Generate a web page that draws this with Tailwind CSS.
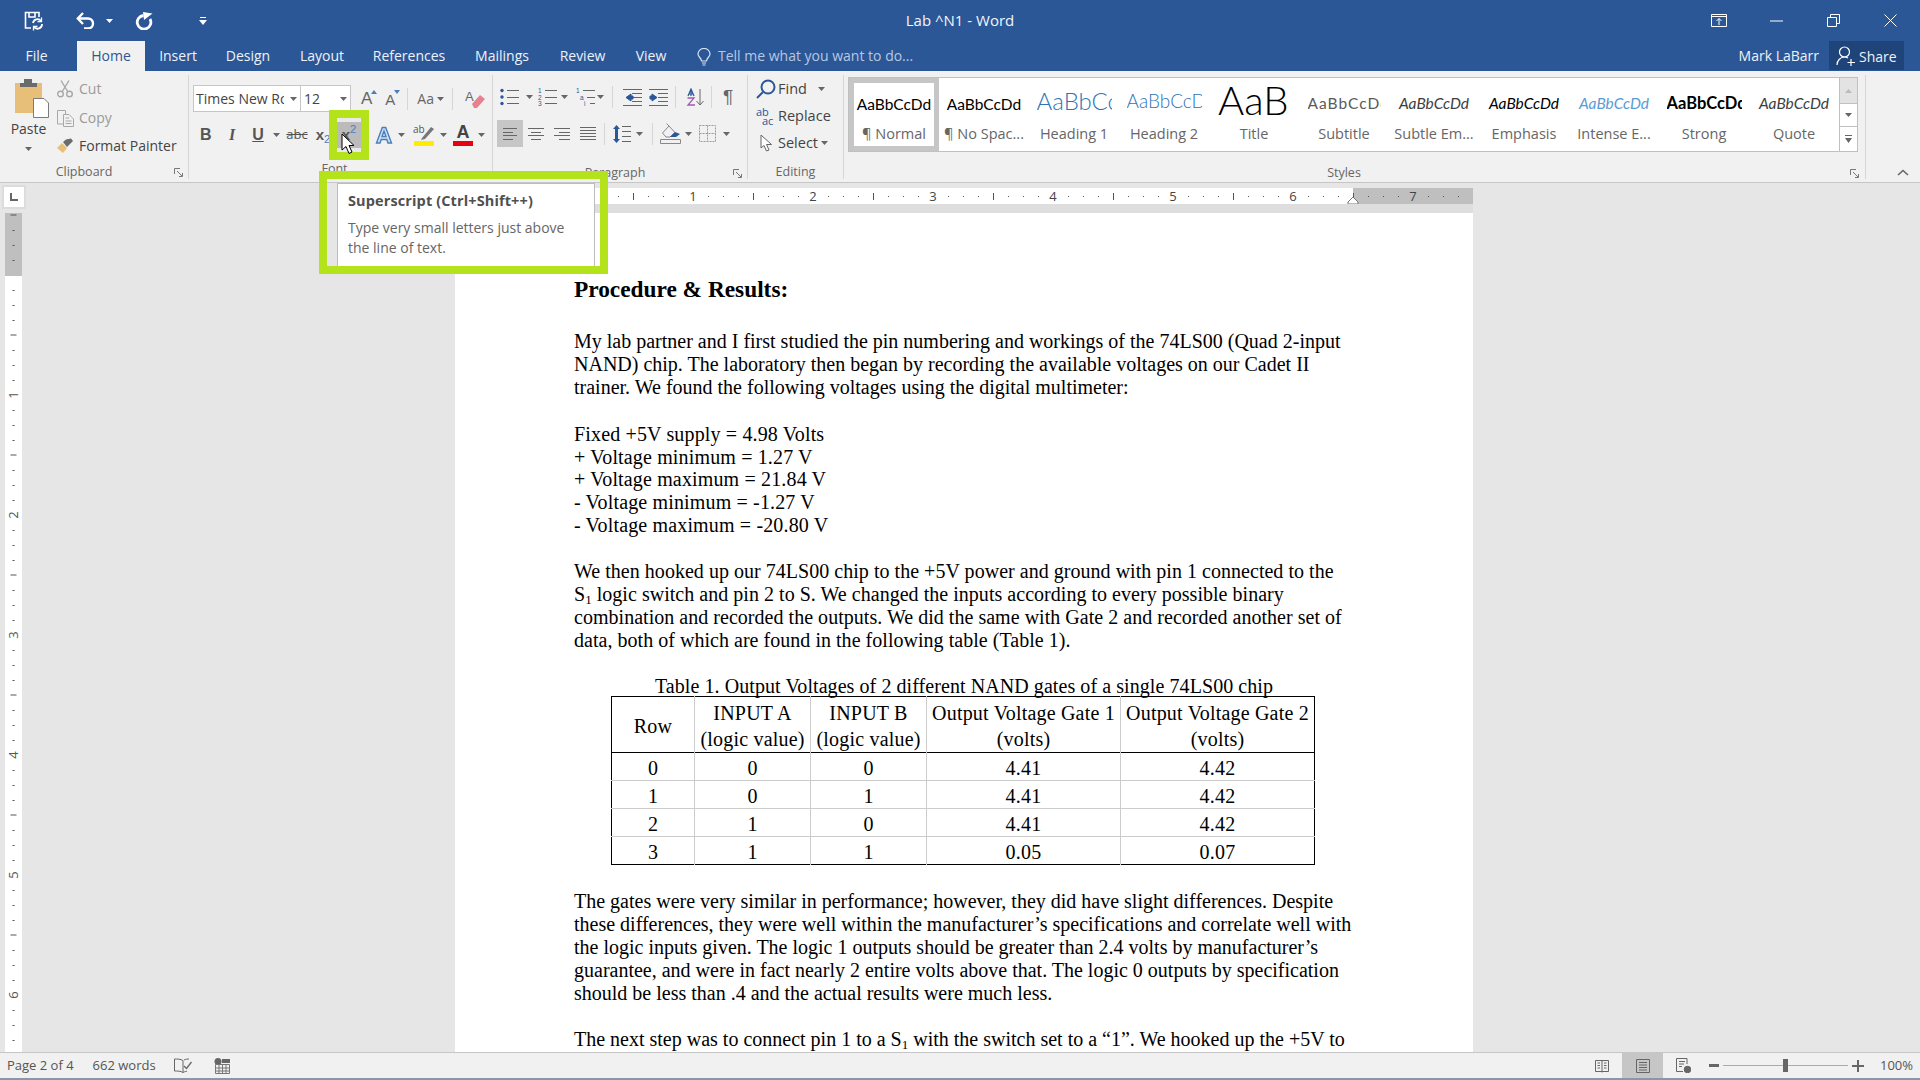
<!DOCTYPE html>
<html lang="en">
<head>
  <meta charset="UTF-8" />
  <title>Lab ^N1 - Word</title>
  <script src="https://cdn.jsdelivr.net/npm/@tailwindcss/browser@4"></script>
</head>
<body class="w-[1920px] h-[1080px] overflow-hidden relative flex flex-col bg-[#e6e6e6] text-[#444] font-['Open_Sans',sans-serif]">

  <!-- Title bar -->
  <header class="h-[41px] shrink-0 bg-[#2b5797] text-white flex items-center relative">
    <svg class="ml-[24px] w-[20px] h-[20px]" viewBox="0 0 20 20" fill="none" stroke="#fff" stroke-width="1.6"><path d="M7 17H1.500V1.500H15V6"/><path d="M5 1.500V6H11V1.500"/><path d="M9 12a4.500 4.500 0 0 1 8-2M18 13a4.500 4.500 0 0 1-8 3" stroke-width="1.800"/><path d="M17.500 6.500V10.500H13.500M9.500 19.500V15.500H13.500" stroke-width="1.300"/></svg>
    <svg class="ml-[32px] w-[19px] h-[17px]" viewBox="0 0 19 17" fill="none" stroke="#fff" stroke-width="2.400"><path d="M2 6.500H12a5 5 0 0 1 0 10H8"/><path d="M7 1 1.800 6.500 7 12"/></svg>
    <svg class="ml-[11px] w-[7px] h-[4px]" viewBox="0 0 7 4" fill="#fff"><path d="M0 0H7L3.500 4Z"/></svg>
    <svg class="ml-[22px] w-[18px] h-[18px]" viewBox="0 0 18 18" fill="none" stroke="#fff" stroke-width="2.800"><path d="M8.500 3.500a6.800 6.800 0 1 0 6.500 3.500"/><path d="M8 0 17.500 1.500 9 8Z" fill="#fff" stroke="none"/></svg>
    <svg class="ml-[46px] w-[8px] h-[8px]" viewBox="0 0 8 8" fill="#fff"><path d="M1 0H7V1H1ZM0 3H8L4 8Z"/></svg>
    <div class="absolute left-0 right-0 top-[10px] text-center text-[15px] leading-[20px] text-[#f1f4fa]">Lab ^N1 - Word</div>
    <div class="ml-auto flex items-center pr-[23px]">
      <svg class="w-[16px] h-[13px]" viewBox="0 0 16 13" fill="none" stroke="#fff"><path d="M.5.500H15.500V12.500H.5ZM.5 2.500H15.500M8 11V4.500M5.500 7 8 4.500 10.500 7"/></svg>
      <svg class="ml-[43px] w-[13px] h-[2px]" viewBox="0 0 13 2"><path d="M0 1H13" stroke="#fff"/></svg>
      <svg class="ml-[44px] w-[13px] h-[13px]" viewBox="0 0 13 13" fill="none" stroke="#fff"><path d="M.5 3.500H9.500V12.500H.5ZM3.500 3.500V.5H12.500V9.500H9.500"/></svg>
      <svg class="ml-[44px] w-[13px] h-[13px]" viewBox="0 0 13 13" fill="none" stroke="#fff"><path d="M.5.500 12.500 12.500M12.500.5.500 12.500"/></svg>
    </div>
  </header>

  <!-- Tabs -->
  <nav class="h-[30px] shrink-0 bg-[#2b5797] text-[#eef2f9] text-[14px] leading-[30px] flex">
    <div class="w-[73px] text-center">File</div>
    <div class="w-[68px] ml-[4px] text-center bg-[#f1f1f1] text-[#2b5797]">Home</div>
    <div class="w-[66px] text-center">Insert</div>
    <div class="w-[74px] text-center">Design</div>
    <div class="w-[74px] text-center">Layout</div>
    <div class="w-[100px] text-center">References</div>
    <div class="w-[86px] text-center">Mailings</div>
    <div class="w-[75px] text-center">Review</div>
    <div class="w-[62px] text-center">View</div>
    <svg class="ml-[15px] mt-[7px] w-[14px] h-[18px]" viewBox="0 0 14 18" fill="none" stroke="#dbe4f2" stroke-width="1.200"><path d="M4.500 13c0-3-3.500-4-3.500-7a6 5.500 0 0 1 12 0c0 3-3.500 4-3.500 7ZM5 15H9M5.500 17H8.500"/></svg>
    <div class="ml-[7px] text-[#b7c7e2]">Tell me what you want to do...</div>
    <div class="ml-auto">Mark LaBarr</div>
    <div class="w-[75px] h-[29px] ml-[10px] mr-[16px] bg-[#1f4479] flex items-center pl-[7px]">
      <svg class="w-[20px] h-[20px]" viewBox="0 0 20 20" fill="none" stroke="#fff" stroke-width="1.200"><circle cx="8.500" cy="6" r="5"/><path d="M1 19c0-4 3-8 7.500-8 1.500 0 2.500.3 3.500 1M15 13V20M11.500 16.500H19"/></svg>
      <span class="ml-[3px] text-[14px] leading-[20px] mt-[2px]">Share</span>
    </div>
  </nav>

  <!-- Ribbon -->
  <section class="h-[112px] shrink-0 bg-[#f1f1f1] border-b border-[#c6c6c6] pt-[4px] flex items-start">

    <!-- Clipboard -->
    <div class="w-[189px] h-[104px] border-r border-[#d6d6d6] flex flex-col">
      <div class="flex h-[91px]">
        <div class="w-[57px] pt-[4px] flex flex-col items-center">
          <svg class="ml-[7px] w-[36px] h-[39px]" viewBox="0 0 36 39"><rect x="1" y="4" width="27" height="30" fill="#e8bf78"/><path d="M6 4H10V0H18V4H23V8H6Z" fill="#6b6b6b"/><path d="M19.500 19.500H30L34.500 24V38.500H19.500Z" fill="#fff" stroke="#7a7a7a"/></svg>
          <span class="text-[14px] leading-[18px] mt-[2px]">Paste</span>
          <svg class="mt-[9px] w-[7px] h-[4px]" viewBox="0 0 7 4" fill="#666"><path d="M0 0H7L3.500 4Z"/></svg>
        </div>
        <div class="text-[14px] leading-[28px]">
          <div class="flex items-center h-[28px] text-[#9a9a9a]">
            <svg class="w-[16px] h-[18px]" viewBox="0 0 16 18" fill="none" stroke="#a8a8a8" stroke-width="1.400"><circle cx="3.500" cy="14" r="2.800"/><circle cx="12.500" cy="14" r="2.800"/><path d="M5 12 12 .5M11 12 4 .5"/></svg>
            <span class="ml-[6px]">Cut</span>
          </div>
          <div class="flex items-center h-[29px] text-[#9a9a9a]">
            <svg class="w-[17px] h-[18px]" viewBox="0 0 17 18" fill="none" stroke="#a8a8a8"><path d="M.5 1.500H8.500V5M.5 1.500V15H6"/><path d="M6.500 5.500H12L16.500 10V17.500H6.500ZM8.500 9H12M8.500 12H14.500M8.500 14.500H14.500"/></svg>
            <span class="ml-[5px]">Copy</span>
          </div>
          <div class="flex items-center h-[27px]">
            <svg class="w-[17px] h-[16px]" viewBox="0 0 17 16"><path d="M0 10 5 5 10 10 6 15Z" fill="#e8bf78"/><path d="M6 4 9 1.500 14 .5 16 3 10 9Z" fill="#6b6b6b"/></svg>
            <span class="ml-[5px]">Format Painter</span>
          </div>
        </div>
      </div>
      <div class="relative text-center text-[12.500px] leading-[14px] text-[#666] pr-[20px]">Clipboard
        <svg class="absolute right-[5px] top-[3px] w-[9px] h-[9px]" viewBox="0 0 9 9" fill="none" stroke="#777"><path d="M.5 6V.5H6M3 3 8 8M8.500 5V8.500H5"/></svg>
      </div>
    </div>

    <!-- Font -->
    <div class="w-[304px] h-[104px] border-r border-[#d6d6d6] flex flex-col pl-[4px]">
      <div class="mt-[10px] h-[27px] flex items-center">
        <div class="w-[108px] h-[27px] bg-white border border-[#c6c6c6] flex items-center">
          <span class="w-[90px] pl-[2px] overflow-hidden whitespace-nowrap text-[14px] leading-[25px]">Times New Roman</span>
          <svg class="ml-[6px] w-[7px] h-[4px]" viewBox="0 0 7 4" fill="#666"><path d="M0 0H7L3.500 4Z"/></svg>
        </div>
        <div class="w-[51px] h-[27px] -ml-px bg-white border border-[#c6c6c6] flex items-center pl-[3px]">
          <span class="text-[14px] leading-[25px]">12</span>
          <svg class="ml-auto mr-[3px] w-[7px] h-[4px]" viewBox="0 0 7 4" fill="#666"><path d="M0 0H7L3.500 4Z"/></svg>
        </div>
        <span class="ml-[10px] text-[17px] leading-[20px] font-['Liberation_Sans',sans-serif] text-[#666]">A</span>
        <svg class="-ml-[1px] -mt-[14px] w-[6px] h-[4px]" viewBox="0 0 6 4" fill="#4a7ebb"><path d="M0 4H6L3 0Z"/></svg>
        <span class="ml-[8px] text-[15px] leading-[20px] mt-[3px] font-['Liberation_Sans',sans-serif] text-[#666]">A</span>
        <svg class="-ml-[1px] -mt-[14px] w-[6px] h-[4px]" viewBox="0 0 6 4" fill="#4a7ebb"><path d="M0 0H6L3 4Z"/></svg>
        <div class="ml-[7px] w-px h-[22px] bg-[#d6d6d6]"></div>
        <span class="ml-[9px] text-[14px] leading-[20px] text-[#666]">Aa</span>
        <svg class="ml-[3px] w-[7px] h-[4px]" viewBox="0 0 7 4" fill="#666"><path d="M0 0H7L3.500 4Z"/></svg>
        <div class="ml-[8px] w-px h-[22px] bg-[#d6d6d6]"></div>
        <svg class="ml-[12px] w-[20px] h-[20px]" viewBox="0 0 20 20"><text x="0" y="12" font-size="13" fill="#666" font-family="Liberation Sans">A</text><path d="M7 15 15 6 20 10 12 19H9Z" fill="#e9808f"/></svg>
      </div>
      <div class="mt-[6px] h-[34px] flex items-center text-[#555]">
        <span class="w-[26px] pl-[7px] text-[16px] font-bold font-['Liberation_Sans',sans-serif]">B</span>
        <span class="w-[26px] text-center text-[16px] font-bold italic font-['Liberation_Serif',serif]">I</span>
        <span class="w-[26px] text-center text-[16px] font-bold underline font-['Liberation_Sans',sans-serif]">U</span>
        <svg class="ml-[2px] w-[7px] h-[4px]" viewBox="0 0 7 4" fill="#666"><path d="M0 0H7L3.500 4Z"/></svg>
        <span class="w-[28px] ml-[3px] text-center text-[13px] line-through">abc</span>
        <span class="w-[24px] text-center text-[15px] font-bold font-['Liberation_Sans',sans-serif] whitespace-nowrap">x<sub class="text-[#4a7ebb] font-normal">2</sub></span>
        <span class="w-[24px] h-[34px] ml-[2px] flex items-center justify-center bg-[#bbb] border-y-[4px] border-[#e9e9e9] text-[15px] font-bold font-['Liberation_Sans',sans-serif] whitespace-nowrap">x<sup class="text-[#4a7ebb] font-normal">2</sup></span>
        <svg class="ml-[13px] w-[20px] h-[20px]" viewBox="0 0 20 20" fill="#cfe0f3" stroke="#4a7ebb" stroke-width="1.400"><path d="M2.500 18 8.300 2.500H11.700L17.500 18H14L12.800 14.500H7.200L6 18ZM8 11.500H12L10 6Z"/></svg>
        <svg class="ml-[4px] w-[7px] h-[4px]" viewBox="0 0 7 4" fill="#666"><path d="M0 0H7L3.500 4Z"/></svg>
        <svg class="ml-[8px] w-[22px] h-[22px]" viewBox="0 0 22 22"><text x="0" y="9" font-size="10" fill="#555" font-family="Open Sans">ab</text><path d="M9 14 18 3 21 5 12 15 8 16Z" fill="#777"/><rect x="1" y="17" width="20" height="5" fill="#ffec00"/></svg>
        <svg class="ml-[5px] w-[7px] h-[4px]" viewBox="0 0 7 4" fill="#666"><path d="M0 0H7L3.500 4Z"/></svg>
        <div class="ml-[5px] w-[22px] flex flex-col items-center">
          <span class="text-[18px] leading-[16px] font-bold font-['Liberation_Sans',sans-serif] text-[#444]">A</span>
          <span class="w-[20px] h-[5px] mt-[1px] bg-[#e60012]"></span>
        </div>
        <svg class="ml-[4px] w-[7px] h-[4px]" viewBox="0 0 7 4" fill="#666"><path d="M0 0H7L3.500 4Z"/></svg>
      </div>
      <div class="mt-[10px] text-center text-[12.500px] leading-[14px] text-[#666] pr-[16px]">Font</div>
    </div>

    <!-- Paragraph -->
    <div class="w-[255px] h-[104px] border-r border-[#d6d6d6] flex flex-col">
      <div class="mt-[12px] h-[20px] flex items-center pl-[7px]">
        <svg class="w-[19px] h-[18px]" viewBox="0 0 19 18" stroke="#666"><path d="M7 2.500H19M7 9.500H19M7 15.500H19"/><g fill="#2b579a" stroke="none"><circle cx="2" cy="2.500" r="1.700"/><circle cx="2" cy="9" r="1.700"/><circle cx="2" cy="15.500" r="1.700"/></g></svg>
        <svg class="ml-[7px] w-[7px] h-[4px]" viewBox="0 0 7 4" fill="#666"><path d="M0 0H7L3.500 4Z"/></svg>
        <svg class="ml-[5px] w-[19px] h-[18px]" viewBox="0 0 19 18" stroke="#666"><path d="M7 2.500H19M7 9.500H19M7 15.500H19"/><g fill="#2b579a" stroke="none" font-size="6.500" font-family="Liberation Sans"><text x="0" y="5">1</text><text x="0" y="12">2</text><text x="0" y="18">3</text></g></svg>
        <svg class="ml-[4px] w-[7px] h-[4px]" viewBox="0 0 7 4" fill="#666"><path d="M0 0H7L3.500 4Z"/></svg>
        <svg class="ml-[8px] w-[19px] h-[18px]" viewBox="0 0 19 18" stroke="#666"><path d="M7 2.500H19M11 9.500H19M14 15.500H19"/><g fill="#2b579a" stroke="none" font-size="6.500" font-family="Liberation Sans"><text x="0" y="5">1</text><text x="4" y="12">a</text><text x="8" y="18">i</text></g></svg>
        <svg class="ml-[2px] w-[7px] h-[4px]" viewBox="0 0 7 4" fill="#666"><path d="M0 0H7L3.500 4Z"/></svg>
        <div class="ml-[8px] w-px h-[22px] bg-[#d6d6d6]"></div>
        <svg class="ml-[10px] w-[19px] h-[17px]" viewBox="0 0 19 17"><path d="M0 .5H19M9 4.500H19M9 8.500H19M9 12.500H19M0 16.500H19" stroke="#666"/><path d="M8 5 3 8.500 8 12V10H10V7H8Z" fill="#2b579a" stroke="#2b579a"/></svg>
        <svg class="ml-[7px] w-[19px] h-[17px]" viewBox="0 0 19 17"><path d="M0 .5H19M9 4.500H19M9 8.500H19M9 12.500H19M0 16.500H19" stroke="#666"/><path d="M3 5 8 8.500 3 12V10H1V7H3Z" fill="#2b579a" stroke="#2b579a"/></svg>
        <div class="ml-[7px] w-px h-[22px] bg-[#d6d6d6]"></div>
        <svg class="ml-[10px] w-[18px] h-[18px]" viewBox="0 0 18 18" fill="none"><path d="M5 8V3M2 8 5 1 8 8M2.500 6H7.500" stroke="#2b579a" stroke-width="1.200"/><path d="M1.500 10H8L2 17H9" stroke="#a05bb0" stroke-width="1.300"/><path d="M14 1V16.500M10.500 13 14 17 17.500 13" stroke="#666"/></svg>
        <div class="ml-[7px] w-px h-[22px] bg-[#d6d6d6]"></div>
        <span class="ml-[11px] text-[19px] leading-[20px] text-[#666] font-['Liberation_Sans',sans-serif]">¶</span>
      </div>
      <div class="mt-[13px] h-[27px] flex items-center pl-[4px]">
        <div class="w-[26px] h-[27px] bg-[#c6c6c6] flex items-center justify-center">
          <svg class="w-[16px] h-[12px]" viewBox="0 0 16 12" stroke="#666"><path d="M1 .5H15M1 4.500H11M1 7.500H15M1 11.500H11"/></svg>
        </div>
        <svg class="ml-[5px] w-[16px] h-[12px]" viewBox="0 0 16 12" stroke="#666"><path d="M0 .5H16M3 4.500H13M0 7.500H16M3 11.500H13"/></svg>
        <svg class="ml-[10px] w-[16px] h-[12px]" viewBox="0 0 16 12" stroke="#666"><path d="M0 .5H16M5 4.500H16M0 7.500H16M5 11.500H16"/></svg>
        <svg class="ml-[10px] w-[16px] h-[14px]" viewBox="0 0 16 14" stroke="#666"><path d="M0 .5H16M0 3.500H16M0 6.500H16M0 9.500H16M0 12.500H16"/></svg>
        <div class="ml-[8px] w-px h-[22px] bg-[#d6d6d6]"></div>
        <svg class="ml-[8px] w-[18px] h-[18px]" viewBox="0 0 18 18"><path d="M3.500 0 7 4H5V14H7L3.500 18 0 14H2V4H0Z" fill="#2b579a"/><path d="M9 1.500H18M9 6.500H18M9 11.500H18M9 16.500H18" stroke="#666"/></svg>
        <svg class="ml-[5px] w-[7px] h-[4px]" viewBox="0 0 7 4" fill="#666"><path d="M0 0H7L3.500 4Z"/></svg>
        <div class="ml-[9px] w-px h-[22px] bg-[#d6d6d6]"></div>
        <svg class="ml-[7px] w-[21px] h-[21px]" viewBox="0 0 21 21" fill="none"><path d="M.5 16.500H20.500V20.500H.5ZM6 14 2.500 10 9 3 15 9.500 10 14Z" stroke="#888"/><path d="M9 3 6.500.5" stroke="#888"/><path d="M15 9 20 11 16 14 10 14Z" fill="#2b579a"/></svg>
        <svg class="ml-[4px] w-[7px] h-[4px]" viewBox="0 0 7 4" fill="#666"><path d="M0 0H7L3.500 4Z"/></svg>
        <svg class="ml-[7px] w-[17px] h-[17px]" viewBox="0 0 17 17" fill="none" stroke="#9a9a9a" stroke-dasharray="2 1"><path d="M.5.500H16.500V16.500H.5ZM.5 8.500H16.500M8.500.5V16.500"/></svg>
        <svg class="ml-[7px] w-[7px] h-[4px]" viewBox="0 0 7 4" fill="#666"><path d="M0 0H7L3.500 4Z"/></svg>
      </div>
      <div class="relative mt-[19px] text-center text-[12.500px] leading-[14px] text-[#666] pr-[10px]">Paragraph
        <svg class="absolute right-[5px] top-[3px] w-[9px] h-[9px]" viewBox="0 0 9 9" fill="none" stroke="#777"><path d="M.5 6V.5H6M3 3 8 8M8.500 5V8.500H5"/></svg>
      </div>
    </div>

    <!-- Editing -->
    <div class="w-[96px] h-[104px] border-r border-[#d6d6d6] flex flex-col">
      <div class="h-[91px] pl-[8px] text-[14.500px]">
        <div class="h-[27px] flex items-center">
          <svg class="w-[20px] h-[20px]" viewBox="0 0 20 20" fill="none" stroke="#2b579a" stroke-width="2"><circle cx="12" cy="8" r="6.500"/><path d="M7 13 1 19"/></svg>
          <span class="ml-[2px]">Find</span>
          <svg class="ml-[11px] w-[7px] h-[4px]" viewBox="0 0 7 4" fill="#666"><path d="M0 0H7L3.500 4Z"/></svg>
        </div>
        <div class="h-[27px] flex items-center">
          <div class="w-[21px] text-[11px] leading-[9px] text-[#2b579a]">ab<br /><span class="pl-[6px]">ac</span></div>
          <span class="ml-[1px]">Replace</span>
        </div>
        <div class="h-[27px] flex items-center">
          <svg class="ml-[4px] w-[13px] h-[18px]" viewBox="0 0 13 18" fill="#fff" stroke="#666"><path d="M1 1V14L4 11.500 6.500 17 9 16 6.500 10.500H11.500Z"/></svg>
          <span class="ml-[5px]">Select</span>
          <svg class="ml-[3px] w-[7px] h-[4px]" viewBox="0 0 7 4" fill="#666"><path d="M0 0H7L3.500 4Z"/></svg>
        </div>
      </div>
      <div class="text-center text-[12.500px] leading-[14px] text-[#666]">Editing</div>
    </div>

    <!-- Styles -->
    <div class="w-[1022px] h-[104px] relative border-r border-[#d6d6d6] flex flex-col pl-[4px]">
      <div class="mt-[2px] h-[75px] w-[1010px] bg-white border border-[#c0c0c0] flex">
        <div class="w-[90px] h-[73px] border-[5px] border-[#c6c6c6] flex flex-col items-center">
          <div class="w-[76px] h-[30px] mt-[3px] overflow-hidden whitespace-nowrap flex items-end justify-center text-black text-[15.500px] leading-[24px] font-['Lato',sans-serif]">AaBbCcDd</div>
          <div class="text-[14.500px] leading-[20px] mt-[8px] text-[#666]">¶ Normal</div>
        </div>
        <div class="w-[90px] flex flex-col items-center pt-[8px]">
          <div class="w-[76px] h-[30px] overflow-hidden whitespace-nowrap flex items-end justify-center text-black text-[15.500px] leading-[24px] font-['Lato',sans-serif]">AaBbCcDd</div>
          <div class="text-[14.500px] leading-[20px] mt-[8px] text-[#666]">¶ No Spac...</div>
        </div>
        <div class="w-[90px] flex flex-col items-center pt-[8px]">
          <div class="w-[75px] h-[30px] overflow-hidden whitespace-nowrap text-[#2e74b5] text-[24px] leading-[30px] font-light font-['Lato',sans-serif]">AaBbCcDd</div>
          <div class="text-[14.500px] leading-[20px] mt-[8px] text-[#666]">Heading 1</div>
        </div>
        <div class="w-[90px] flex flex-col items-center pt-[8px]">
          <div class="w-[75px] h-[30px] overflow-hidden whitespace-nowrap text-[#2e74b5] text-[19px] leading-[30px] font-light font-['Lato',sans-serif]">AaBbCcDd</div>
          <div class="text-[14.500px] leading-[20px] mt-[8px] text-[#666]">Heading 2</div>
        </div>
        <div class="w-[90px] flex flex-col items-center pt-[8px]">
          <div class="w-[72px] h-[30px] overflow-hidden whitespace-nowrap text-black text-[40px] leading-[28px] font-light font-['Lato',sans-serif]">AaBbCcDd</div>
          <div class="text-[14.500px] leading-[20px] mt-[8px] text-[#666]">Title</div>
        </div>
        <div class="w-[90px] flex flex-col items-center pt-[8px]">
          <div class="w-[73px] h-[30px] overflow-hidden whitespace-nowrap text-[#5a5a5a] text-[15.500px] tracking-[1px] leading-[35px] font-['Lato',sans-serif]">AaBbCcDd</div>
          <div class="text-[14.500px] leading-[20px] mt-[8px] text-[#666]">Subtitle</div>
        </div>
        <div class="w-[90px] flex flex-col items-center pt-[8px]">
          <div class="w-[76px] h-[30px] overflow-hidden whitespace-nowrap text-center text-[#404040] text-[15.500px] italic leading-[35px] font-['Lato',sans-serif]">AaBbCcDd</div>
          <div class="text-[14.500px] leading-[20px] mt-[8px] text-[#666]">Subtle Em...</div>
        </div>
        <div class="w-[90px] flex flex-col items-center pt-[8px]">
          <div class="w-[76px] h-[30px] overflow-hidden whitespace-nowrap text-center text-black text-[15.500px] italic leading-[35px] font-['Lato',sans-serif]">AaBbCcDd</div>
          <div class="text-[14.500px] leading-[20px] mt-[8px] text-[#666]">Emphasis</div>
        </div>
        <div class="w-[90px] flex flex-col items-center pt-[8px]">
          <div class="w-[76px] h-[30px] overflow-hidden whitespace-nowrap text-center text-[#5b9bd5] text-[15.500px] italic leading-[35px] font-['Lato',sans-serif]">AaBbCcDd</div>
          <div class="text-[14.500px] leading-[20px] mt-[8px] text-[#666]">Intense E...</div>
        </div>
        <div class="w-[90px] flex flex-col items-center pt-[8px]">
          <div class="w-[75px] h-[30px] overflow-hidden whitespace-nowrap text-black text-[16.500px] font-bold leading-[35px] font-['Lato',sans-serif]">AaBbCcDd</div>
          <div class="text-[14.500px] leading-[20px] mt-[8px] text-[#666]">Strong</div>
        </div>
        <div class="w-[90px] flex flex-col items-center pt-[8px]">
          <div class="w-[76px] h-[30px] overflow-hidden whitespace-nowrap text-center text-[#404040] text-[15.500px] italic leading-[35px] font-['Lato',sans-serif]">AaBbCcDd</div>
          <div class="text-[14.500px] leading-[20px] mt-[8px] text-[#666]">Quote</div>
        </div>
        <div class="w-[18px] border-l border-[#c0c0c0] flex flex-col">
          <div class="h-[26px] bg-[#e3e3e3] border-b border-[#c0c0c0] flex items-center justify-center"><svg class="w-[7px] h-[4px]" viewBox="0 0 7 4" fill="#bbb"><path d="M0 4H7L3.500 0Z"/></svg></div>
          <div class="h-[23px] border-b border-[#c0c0c0] flex items-center justify-center"><svg class="w-[7px] h-[4px]" viewBox="0 0 7 4" fill="#666"><path d="M0 0H7L3.500 4Z"/></svg></div>
          <div class="flex-1 flex items-center justify-center"><svg class="w-[7px] h-[8px]" viewBox="0 0 7 8" fill="#666"><path d="M0 0H7V1H0ZM0 3H7L3.500 8Z"/></svg></div>
        </div>
      </div>
      <div class="relative mt-[14px] text-center text-[12.500px] leading-[14px] text-[#666] w-[1010px] pr-[18px]">Styles
        <svg class="absolute -right-[1px] top-[3px] w-[9px] h-[9px]" viewBox="0 0 9 9" fill="none" stroke="#777"><path d="M.5 6V.5H6M3 3 8 8M8.500 5V8.500H5"/></svg>
      </div>
    </div>
    <svg class="ml-[31px] mt-[94px] w-[12px] h-[7px]" viewBox="0 0 12 7" fill="none" stroke="#666" stroke-width="1.600"><path d="M1 6 6 1.500 11 6"/></svg>
  </section>

  <!-- Document area -->
  <main class="h-[869px] shrink-0 flex overflow-hidden">
    <div class="w-[455px] shrink-0 pl-[4px] pt-[4px]">
      <div class="w-[20px] h-[20px] bg-white shadow-[0_0_0_2px_#dcdcdc] flex items-center justify-center">
        <svg class="w-[8px] h-[8px]" viewBox="0 0 8 8" fill="none" stroke="#666" stroke-width="2"><path d="M1 0V7H8"/></svg>
      </div>
      <svg class="ml-[1px] mt-[6px] w-[17px] h-[840px]" viewBox="0 0 17 840">
        <rect width="17" height="63" fill="#bfbfbf"/>
        <rect y="63" width="17" height="777" fill="#fff"/>
        <path d="M8.500 17V840" stroke="#555" stroke-width="2" stroke-dasharray="1 14 1 14 1 29 1 14 1 14 1 29"/>
        <path d="M5.500 2H11.500M5.500 122H11.500M5.500 242H11.500M5.500 362H11.500M5.500 482H11.500M5.500 602H11.500M5.500 722H11.500" stroke="#555"/>
        <g fill="#555" font-size="13" font-family="Open Sans" text-anchor="middle">
          <text transform="translate(13 182) rotate(-90)">1</text>
          <text transform="translate(13 302) rotate(-90)">2</text>
          <text transform="translate(13 422) rotate(-90)">3</text>
          <text transform="translate(13 542) rotate(-90)">4</text>
          <text transform="translate(13 662) rotate(-90)">5</text>
          <text transform="translate(13 782) rotate(-90)">6</text>
        </g>
      </svg>
    </div>

    <div class="w-[1018px] shrink-0 pt-[5px]">
      <svg class="block w-[1018px] h-[16px]" viewBox="0 0 1018 16">
        <rect width="1018" height="16" fill="#bfbfbf"/>
        <rect x="118" width="780" height="16" fill="#fff"/>
        <path d="M133 8.500H1018" stroke="#555" stroke-dasharray="1 14 1 14 1 29 1 14 1 14 1 29"/>
        <path d="M178.500 5V12M298.500 5V12M418.500 5V12M538.500 5V12M658.500 5V12M778.500 5V12M898.500 5V12" stroke="#555"/>
        <g fill="#444" font-size="13" font-family="Open Sans" text-anchor="middle">
          <text x="238" y="13">1</text><text x="358" y="13">2</text><text x="478" y="13">3</text><text x="598" y="13">4</text>
          <text x="718" y="13">5</text><text x="838" y="13">6</text><text x="958" y="13">7</text>
        </g>
        <path d="M898 9 903 14V16H893V14Z" fill="#fff" stroke="#777"/>
      </svg>
      <div class="h-[9px] bg-[#dedede]"></div>

      <!-- Page -->
      <article class="h-[900px] bg-white pl-[119px] pt-[64px] text-black font-['Liberation_Serif',serif] text-[20px] leading-[22.9px] whitespace-nowrap">
        <h2 class="text-[23.330px] leading-[24px] font-bold">Procedure &amp; Results:</h2>
        <p class="mt-[29px]">My lab partner and I first studied the pin numbering and workings of the 74LS00 (Quad 2-input<br />NAND) chip. The laboratory then began by recording the available voltages on our Cadet II<br />trainer. We found the following voltages using the digital multimeter:</p>
        <p class="mt-[23.900px] tracking-[0.15px]">Fixed +5V supply = 4.98 Volts<br />+ Voltage minimum = 1.27 V<br />+ Voltage maximum = 21.84 V<br />- Voltage minimum = -1.27 V<br />- Voltage maximum = -20.80 V</p>
        <p class="mt-[22.9px] tracking-[0.03px]">We then hooked up our 74LS00 chip to the +5V power and ground with pin 1 connected to the<br />S<sub class="text-[13px]">1</sub> logic switch and pin 2 to S. We changed the inputs according to every possible binary<br />combination and recorded the outputs. We did the same with Gate 2 and recorded another set of<br />data, both of which are found in the following table (Table 1).</p>
        <p class="mt-[22.9px] w-[780px] text-center tracking-[0.07px]">Table 1. Output Voltages of 2 different NAND gates of a single 74LS00 chip</p>
        <table class="-mt-[1px] ml-[37px] w-[703px] table-fixed border-collapse border border-black text-center text-[20px] leading-[24px] tracking-[0.2px] [&_td]:pt-[3px]">
          <colgroup><col class="w-[83px]" /><col class="w-[116px]" /><col class="w-[116px]" /><col class="w-[194px]" /><col class="w-[194px]" /></colgroup>
          <tr class="h-[55px] border-b border-black leading-[26px]">
            <td class="border-r border-[#ccc]">Row</td>
            <td class="border-r border-[#ccc]">INPUT A<br />(logic value)</td>
            <td class="border-r border-[#ccc]">INPUT B<br />(logic value)</td>
            <td class="border-r border-[#ccc]">Output Voltage Gate 1<br />(volts)</td>
            <td>Output Voltage Gate 2<br />(volts)</td>
          </tr>
          <tr class="h-[28px] border-b border-[#ccc]"><td class="border-r border-[#ccc]">0</td><td class="border-r border-[#ccc]">0</td><td class="border-r border-[#ccc]">0</td><td class="border-r border-[#ccc]">4.41</td><td>4.42</td></tr>
          <tr class="h-[28px] border-b border-[#ccc]"><td class="border-r border-[#ccc]">1</td><td class="border-r border-[#ccc]">0</td><td class="border-r border-[#ccc]">1</td><td class="border-r border-[#ccc]">4.41</td><td>4.42</td></tr>
          <tr class="h-[27px] border-b border-[#ccc]"><td class="border-r border-[#ccc]">2</td><td class="border-r border-[#ccc]">1</td><td class="border-r border-[#ccc]">0</td><td class="border-r border-[#ccc]">4.41</td><td>4.42</td></tr>
          <tr class="h-[28px]"><td class="border-r border-[#ccc]">3</td><td class="border-r border-[#ccc]">1</td><td class="border-r border-[#ccc]">1</td><td class="border-r border-[#ccc]">0.05</td><td>0.07</td></tr>
        </table>
        <p class="mt-[25px]">The gates were very similar in performance; however, they did have slight differences. Despite<br />these differences, they were well within the manufacturer’s specifications and correlate well with<br />the logic inputs given. The logic 1 outputs should be greater than 2.4 volts by manufacturer’s<br />guarantee, and were in fact nearly 2 entire volts above that. The logic 0 outputs by specification<br />should be less than .4 and the actual results were much less.</p>
        <p class="mt-[22.9px]">The next step was to connect pin 1 to a S<sub class="text-[13px]">1</sub> with the switch set to a “1”. We hooked up the +5V to</p>
      </article>
    </div>
  </main>

  <!-- Status bar -->
  <footer class="h-[26px] shrink-0 bg-[#f1f1f1] border-t border-[#c6c6c6] flex items-center text-[13px] text-[#555]">
    <span class="ml-[7px]">Page 2 of 4</span>
    <span class="ml-[19px]">662 words</span>
    <svg class="ml-[18px] w-[18px] h-[15px]" viewBox="0 0 18 15" fill="none" stroke="#666"><path d="M9 2.500C7 1 3 1 .5 1V13C3 13 7 13 9 14.500 10 14 11 13.500 13 13.200M9 2.500V14.500M10 2C12 1 14 1 15 1"/><path d="M10 8 12.500 10.500 17.500 4" stroke-width="1.300"/></svg>
    <svg class="ml-[22px] w-[16px] h-[16px]" viewBox="0 0 16 16" fill="none"><circle cx="4" cy="3.500" r="3.500" fill="#666"/><path d="M8 1H16V5H8Z" fill="#666"/><path d="M1.500 6.500H15.500V15.500H1.500ZM1.500 10H15.500M1.500 13H15.500M5 6.500V15.500M8.500 6.500V15.500M12 6.500V15.500" stroke="#777"/></svg>
    <div class="ml-auto flex items-center h-full">
      <svg class="w-[14px] h-[14px]" viewBox="0 0 14 14" fill="none" stroke="#666"><path d="M.5 1.500H13.500V12.500H.5ZM7 1.500V13.500M2.500 4H5M2.500 6.500H5M2.500 9H5M9 4H11.500M9 6.500H11.500M9 9H11.500"/></svg>
      <div class="ml-[13px] w-[41px] h-full bg-[#c6c6c6] flex items-center justify-center">
        <svg class="w-[14px] h-[14px]" viewBox="0 0 14 14" fill="none" stroke="#666"><path d="M.5.500H13.500V13.500H.5ZM3 3.500H11M3 6H11M3 8.500H11M3 11H11"/></svg>
      </div>
      <svg class="ml-[13px] w-[15px] h-[15px]" viewBox="0 0 15 15" fill="none" stroke="#666"><path d="M7 13.500H.5V.5H11V6M3 3.500H9M3 6H8M3 8.500H6"/><circle cx="11.500" cy="11.500" r="3.300" fill="#666"/></svg>
      <svg class="ml-[18px] w-[10px] h-[3px]" viewBox="0 0 10 3" fill="#666"><path d="M0 0H10V3H0Z"/></svg>
      <div class="ml-[4px] w-[125px] h-[13px] relative flex items-center">
        <div class="w-full h-px bg-[#aaa]"></div>
        <div class="absolute left-[60px] w-[5px] h-[13px] bg-[#666]"></div>
      </div>
      <svg class="ml-[4px] w-[12px] h-[12px]" viewBox="0 0 12 12" fill="#666"><path d="M5 0H7V5H12V7H7V12H5V7H0V5H5Z"/></svg>
      <span class="ml-[16px] mr-[10px] w-[30px] whitespace-nowrap">100%</span>
    </div>
  </footer>
  <div class="h-[2px] shrink-0 bg-[#8a97a8]"></div>

  <!-- Green callouts, tooltip and mouse pointer -->
  <div class="absolute left-[329px] top-[110px] w-[40px] h-[50px] border-[8px] border-[#b5e31b]"></div>
  <div class="absolute left-[319px] top-[171px] w-[289px] h-[103px] border-[8px] border-[#b5e31b]">
    <div class="absolute left-[10px] top-[4px] w-[258px] h-[83px] bg-white border-x border-t border-[#bcbcbc] pl-[10px] pt-[7px]">
      <div class="text-[14.500px] leading-[20px] tracking-[0.12px] font-bold text-[#505050] whitespace-nowrap">Superscript (Ctrl+Shift++)</div>
      <div class="text-[14px] leading-[19.500px] mt-[7px] text-[#666]">Type very small letters just above<br />the line of text.</div>
    </div>
  </div>
  <svg class="absolute left-[341px] top-[133px] w-[14px] h-[22px]" viewBox="0 0 14 22" fill="#fff" stroke="#000"><path d="M1 1V17L5 13.500 8 20.500 11 19 8 12.500H13Z"/></svg>

</body>
</html>
